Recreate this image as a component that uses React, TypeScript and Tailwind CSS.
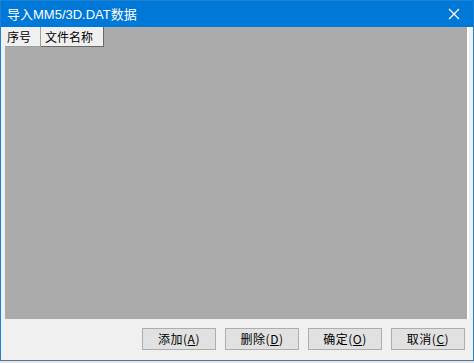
export default function App() {
  const buttons = [
    { label: "添加", key: "A" },
    { label: "删除", key: "D" },
    { label: "确定", key: "O" },
    { label: "取消", key: "C" },
  ];

  return (
    <div className="h-[363px] w-[474px] bg-[#dfe9f5] font-['Noto_Sans_CJK_SC',sans-serif]">
      <div className="flex h-[361px] w-[474px] flex-col border border-[#1883d7] border-b-[#6f6f6f] bg-[#f0f0f0]">
        <div className="flex h-[26px] shrink-0 items-center justify-between bg-[#0078d7] pl-[6px] pr-[13px] text-white">
          <span className="font-['Liberation_Sans','Noto_Sans_CJK_SC',sans-serif] text-[13px] leading-none">导入MM5/3D.DAT数据</span>
          <svg width="12" height="12" viewBox="0 0 12 12" className="text-white">
            <path d="M1 1 L11 11 M11 1 L1 11" stroke="currentColor" strokeWidth="1.2" />
          </svg>
        </div>
        <div className="flex flex-1 flex-col px-[4px]">
          <div className="flex-1 border-r-2 border-r-white bg-[#ababab]">
            <div className="flex h-[20px] text-[12px] leading-none text-black">
              <div className="flex w-[36px] items-center border-r border-b border-r-[#a0a0a0] border-b-[#a0a0a0] bg-[#f0f0f0] pl-[2px]">序号</div>
              <div className="flex w-[63px] items-center border-r border-b border-r-[#696969] border-b-[#696969] bg-[#f0f0f0] pl-[4px]">文件名称</div>
            </div>
          </div>
        </div>
        <div className="flex h-[41px] shrink-0 items-center justify-end gap-[9px] pr-[8px] pb-[1px]">
          {buttons.map((b) => (
            <button
              key={b.key}
              className="flex h-[22px] w-[74px] items-center justify-center border border-[#adadad] bg-[#e1e1e1] text-[12px] leading-none tracking-[0.5px] text-black"
            >
              {b.label}(<span className="underline">{b.key}</span>)
            </button>
          ))}
        </div>
      </div>
    </div>
  );
}
